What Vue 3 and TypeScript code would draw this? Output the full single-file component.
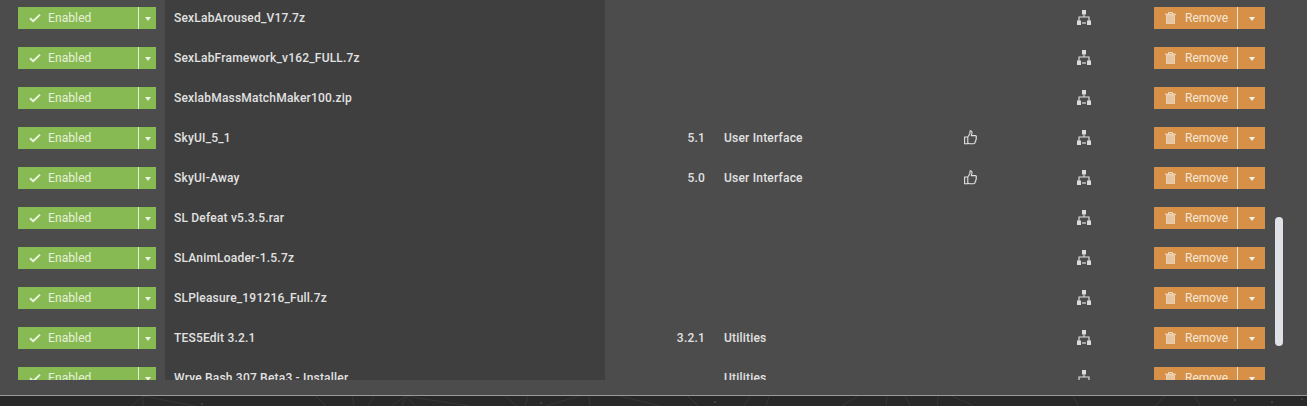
<script setup lang="ts">
interface Mod { name: string; version?: string; category?: string; liked?: boolean }
const mods: Mod[] = [
  { name: 'SexLabAroused_V17.7z' },
  { name: 'SexLabFramework_v162_FULL.7z' },
  { name: 'SexlabMassMatchMaker100.zip' },
  { name: 'SkyUI_5_1', version: '5.1', category: 'User Interface', liked: true },
  { name: 'SkyUI-Away', version: '5.0', category: 'User Interface', liked: true },
  { name: 'SL Defeat v5.3.5.rar' },
  { name: 'SLAnimLoader-1.5.7z' },
  { name: 'SLPleasure_191216_Full.7z' },
  { name: 'TES5Edit 3.2.1', version: '3.2.1', category: 'Utilities' },
  { name: 'Wrye Bash 307 Beta3 - Installer', category: 'Utilities' },
]
const dots: [number, number][] = [[202, 8], [541, 7], [715, 6], [1235, 4], [1272, 6], [1302, 3]]
</script>

<template>
  <div class="page">
    <div class="viewport">
      <div class="list">
        <div v-for="m in mods" :key="m.name" class="row">
          <div class="status">
            <div class="btn green">
              <span class="main">
                <svg class="check" width="12" height="10" viewBox="0 0 12 10"><path d="M1 5.2 L4.2 8.2 L11 1.6" fill="none" stroke="#e9f3df" stroke-width="2"/></svg>
                Enabled
              </span>
              <span class="caret-box"><i class="caret"></i></span>
            </div>
          </div>
          <div class="name">{{ m.name }}</div>
          <div class="version">{{ m.version }}</div>
          <div class="category">{{ m.category }}</div>
          <div class="like">
            <svg v-if="m.liked" class="icon" width="13" height="15" viewBox="0 0 13 15">
              <path d="M3.8 7 L5.8 3.8 L6.2 0.8 C7.6 0.6 8.2 2 7.9 3.4 L7.3 5.6 L11.2 5.6 C12.4 5.6 12.7 6.8 12 7.6 C12.6 8.4 12.4 9.4 11.7 9.9 C12 10.8 11.6 11.6 11 12 C11.1 13 10.6 13.8 9.6 13.8 L5.6 13.8 L3.8 13.2 Z M0.6 7 H3.8 V13.8 H0.6 Z" fill="none" stroke="#e2e2e2" stroke-width="1.1"/>
            </svg>
          </div>
          <div class="tree">
            <svg class="icon" width="14" height="15" viewBox="0 0 14 15">
              <rect x="5" y="0" width="4" height="4.5" fill="#dcdcdc"/>
              <path d="M7 4.5 V7 M2 11 V7 H12 V11" fill="none" stroke="#dcdcdc" stroke-width="1.2"/>
              <rect x="0" y="10.5" width="4" height="4.5" fill="#dcdcdc"/>
              <rect x="10" y="10.5" width="4" height="4.5" fill="#dcdcdc"/>
              <rect x="5" y="12.4" width="4" height="1.2" fill="#dcdcdc"/>
            </svg>
          </div>
          <div class="actions">
            <div class="btn orange">
              <span class="main">
                <svg width="11" height="12" viewBox="0 0 11 12">
                  <path d="M0 2.2 H11 M3.5 2 V0.6 H7.5 V2" fill="none" stroke="#f3e4d2" stroke-width="1"/>
                  <rect x="1.5" y="3" width="8" height="8.5" fill="#eeddc8" opacity="0.7" stroke="#f5e9da" stroke-width="1"/>
                </svg>
                Remove
              </span>
              <span class="caret-box"><i class="caret"></i></span>
            </div>
          </div>
        </div>
      </div>
      <div class="scrollbar"></div>
    </div>
    <div class="strip"></div>
    <div class="ground">
      <svg width="1307" height="10" viewBox="0 0 1307 10">
        <path d="M143 0 L132 10 M143 0 L143 10 M143 0 L195 10 M316 0 L326 10 M352 0 L354 10 M374 0 L368 10 M405 0 L392 10 M405 0 L402 10 M405 0 L416 10 M405 0 L470 10 M505 0 L517 10 M528 0 L525 10 M579 0 L546 10 M589 0 L590 10 M620 0 L660 10 M688 0 L698 10 M750 0 L744 10 M769 0 L766 10 M858 0 L842 10 M887 0 L886 10 M905 0 L910 10 M938 0 L937 10 M952 0 L974 10 M1073 0 L1078 10 M1165 0 L1155 10 M1195 0 L1200 10" fill="none" stroke="#363636" stroke-width="1"/>
        <circle v-for="d in dots" :key="d[0]" :cx="d[0]" :cy="d[1]" r="1" fill="#484848"/>
      </svg>
    </div>
  </div>
</template>

<style scoped>
.page {
  width: 1307px;
  height: 406px;
  background: #4c4c4c;
  font-family: Roboto, "Liberation Sans", sans-serif;
  font-size: 12px;
  font-weight: 500;
  letter-spacing: 0.2px;
  color: #e2e2e2;
  overflow: hidden;
  display: flex;
  flex-direction: column;
}
.viewport {
  position: relative;
  height: 380px;
  overflow: hidden;
  flex: none;
}
.list { margin-top: -2px; }
.row {
  display: grid;
  grid-template-columns: 165px 440px 100px 219px 90px 144px 1fr;
  height: 40px;
  align-items: center;
}
.status { padding-left: 18px; }
.name {
  height: 40px;
  line-height: 40px;
  padding-left: 9px;
  background: #3f3f3f;
  white-space: nowrap;
  overflow: hidden;
}
.version { text-align: right; }
.category { padding-left: 19px; }
.like {
  display: flex;
  padding-left: 40px;
}
.tree {
  display: flex;
  padding-left: 63px;
}
.icon { margin-top: -1px; }
.actions { margin-left: -4px; }
.btn {
  display: flex;
  height: 22px;
  font-weight: 400;
  letter-spacing: 0;
}
.green { width: 138px; background: #88ba54; color: #e6f1da; }
.orange { width: 111px; background: #d69047; color: #f5e9da; }
.main {
  flex: 1;
  display: flex;
  align-items: center;
  justify-content: flex-start;
  white-space: nowrap;
}
.green .main { padding-left: 11px; gap: 7px; letter-spacing: 0.1px; }
.orange .main { padding-left: 11px; gap: 9px; }
.caret-box {
  display: flex;
  align-items: center;
  justify-content: center;
  border-left: 1px solid rgba(255, 255, 255, 0.75);
}
.green .caret-box { width: 17px; }
.orange .caret-box { width: 27px; }
.caret {
  display: block;
  width: 0;
  height: 0;
  margin-top: 1px;
  border-left: 3.5px solid transparent;
  border-right: 3.5px solid transparent;
  border-top: 4px solid #f2f2ea;
}
.scrollbar {
  position: absolute;
  left: 1275px;
  top: 217px;
  width: 8px;
  height: 129px;
  border-radius: 4px;
  background: #dfe1e6;
}
.strip { height: 15px; flex: none; background: #4c4c4c; }
.ground {
  flex: 1;
  background: #282828;
  border-top: 1px solid #999;
  overflow: hidden;
}
.ground svg { display: block; }
</style>
